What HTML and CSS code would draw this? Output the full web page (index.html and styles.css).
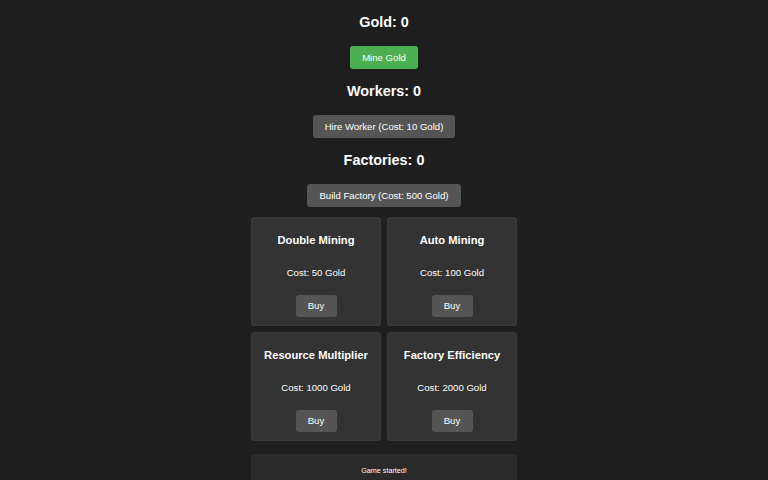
FILE: index.html
```html
<!DOCTYPE html>
<html>
<head>
<meta charset="utf-8">
<link rel="stylesheet" href="styles.css">
</head>
<body>
<div class="game">
  <section class="resource">
    <h2 class="res-title">Gold: <span>0</span></h2>
    <button class="btn btn-green">Mine Gold</button>
  </section>
  <section class="resource">
    <h2 class="res-title">Workers: <span>0</span></h2>
    <button class="btn">Hire Worker (Cost: 10 Gold)</button>
  </section>
  <section class="resource">
    <h2 class="res-title">Factories: <span>0</span></h2>
    <button class="btn">Build Factory (Cost: 500 Gold)</button>
  </section>
  <div class="upgrades">
    <div class="card">
      <h3 class="card-title">Double Mining</h3>
      <p class="card-cost">Cost: 50 Gold</p>
      <button class="btn btn-buy">Buy</button>
    </div>
    <div class="card">
      <h3 class="card-title">Auto Mining</h3>
      <p class="card-cost">Cost: 100 Gold</p>
      <button class="btn btn-buy">Buy</button>
    </div>
    <div class="card">
      <h3 class="card-title">Resource Multiplier</h3>
      <p class="card-cost">Cost: 1000 Gold</p>
      <button class="btn btn-buy">Buy</button>
    </div>
    <div class="card">
      <h3 class="card-title">Factory Efficiency</h3>
      <p class="card-cost">Cost: 2000 Gold</p>
      <button class="btn btn-buy">Buy</button>
    </div>
  </div>
  <div class="log">
    <p class="log-line">Game started!</p>
  </div>
</div>
</body>
</html>
```
FILE: styles.css
```css
html, body {
  margin: 0;
  padding: 0;
  background: #1e1e1e;
}
body {
  font-family: "Liberation Sans", Arial, sans-serif;
  color: #ffffff;
  text-align: center;
}
.game {
  display: flex;
  flex-direction: column;
  align-items: center;
  padding-top: 14px;
}
.resource {
  display: flex;
  flex-direction: column;
  align-items: center;
}
.res-title {
  margin: 0;
  font-size: 14.4px;
  line-height: 17px;
  font-weight: bold;
}
.btn {
  font-family: "Liberation Sans", Arial, sans-serif;
  font-size: 9.6px;
  color: #ffffff;
  background: #555555;
  border: none;
  border-radius: 3px;
  padding: 0 12px;
  height: 23px;
  margin: 14.5px 0 14.5px;
  cursor: pointer;
}
.btn-green {
  background: #4caf50;
}
.resource:last-of-type .btn {
  margin-bottom: 10px;
}
.upgrades {
  display: grid;
  grid-template-columns: 130px 130px;
  gap: 6px;
  width: 266px;
}
.card {
  box-sizing: border-box;
  height: 109px;
  background: #333333;
  border: 1px solid #3a3a3a;
  border-radius: 3px;
  padding: 5px;
  display: flex;
  flex-direction: column;
  align-items: center;
}
.card-title {
  margin: 11px 0;
  font-size: 11.2px;
  line-height: 13px;
  font-weight: bold;
}
.card-cost {
  margin: 9.6px 0;
  font-size: 9.6px;
  line-height: 11px;
}
.btn-buy {
  height: 22px;
  width: 41px;
  padding: 0;
  margin: 7px 0 0;
}
.log {
  box-sizing: border-box;
  width: 266px;
  margin-top: 13px;
  background: #2a2a2a;
  border-radius: 3px;
  padding: 11px 9px 9px;
  min-height: 40px;
}
.log-line {
  margin: 0;
  font-size: 7.2px;
  line-height: 12px;
}
```
